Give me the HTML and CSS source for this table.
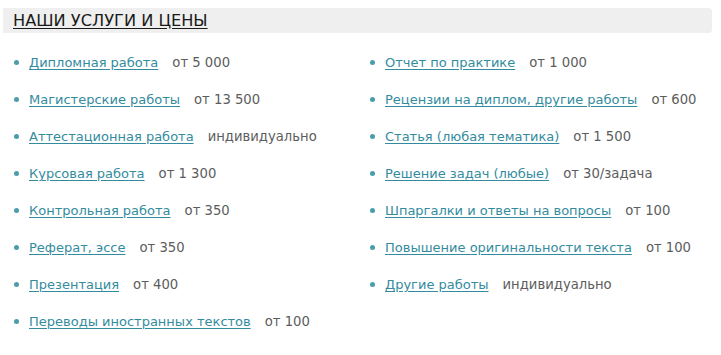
FILE: index.html
```html
<!DOCTYPE html>
<html lang="ru">
<head>
<meta charset="utf-8">
<title>Наши услуги и цены</title>
<link rel="stylesheet" href="styles.css">
</head>
<body>
<div class="page">
  <div class="head-bar"><h2 class="title">НАШИ УСЛУГИ И ЦЕНЫ</h2></div>
  <div class="cols">
    <ul class="list">
      <li><a href="#">Дипломная работа</a><span class="price">от 5 000</span></li>
      <li><a href="#">Магистерские работы</a><span class="price">от 13 500</span></li>
      <li><a href="#">Аттестационная работа</a><span class="price">индивидуально</span></li>
      <li><a href="#">Курсовая работа</a><span class="price">от 1 300</span></li>
      <li><a href="#">Контрольная работа</a><span class="price">от 350</span></li>
      <li><a href="#">Реферат, эссе</a><span class="price">от 350</span></li>
      <li><a href="#">Презентация</a><span class="price">от 400</span></li>
      <li><a href="#">Переводы иностранных текстов</a><span class="price">от 100</span></li>
    </ul>
    <ul class="list">
      <li><a href="#">Отчет по практике</a><span class="price">от 1 000</span></li>
      <li><a href="#">Рецензии на диплом, другие работы</a><span class="price">от 600</span></li>
      <li><a href="#">Статья (любая тематика)</a><span class="price">от 1 500</span></li>
      <li><a href="#">Решение задач (любые)</a><span class="price">от 30/задача</span></li>
      <li><a href="#">Шпаргалки и ответы на вопросы</a><span class="price">от 100</span></li>
      <li><a href="#">Повышение оригинальности текста</a><span class="price">от 100</span></li>
      <li><a href="#">Другие работы</a><span class="price">индивидуально</span></li>
    </ul>
  </div>
</div>
</body>
</html>
```
FILE: styles.css
```css
html, body {
  margin: 0;
  padding: 0;
  background: #ffffff;
}
body {
  font-family: "DejaVu Sans", Verdana, sans-serif;
  font-size: 13px;
}
.page {
  padding: 8px 9px 0 3px;
}
.head-bar {
  background: #efefef;
  height: 25px;
  border-radius: 0 4px 4px 0;
  display: flex;
  align-items: center;
  padding-left: 10px;
}
.title {
  margin: 0;
  font-weight: normal;
  font-size: 16.2px;
  color: #1a1a1a;
  text-decoration: underline;
  text-underline-offset: 2px;
}
.cols {
  display: flex;
  padding-top: 11px;
}
.list {
  list-style: none;
  margin: 0;
  padding: 0 0 0 11px;
  display: flex;
  flex-direction: column;
}
.list:first-child {
  width: 345px;
}
.list li {
  height: 37px;
  display: flex;
  align-items: center;
  white-space: nowrap;
}
.list li::before {
  content: "";
  width: 5px;
  height: 5px;
  border-radius: 50%;
  background: #4a9eab;
  margin-right: 10px;
  flex: none;
}
.list a {
  color: #338c9e;
  text-decoration: underline;
  text-underline-offset: 2px;
}
.price {
  color: #5c5c5c;
  font-size: 13.2px;
  margin-left: 14px;
}
```
